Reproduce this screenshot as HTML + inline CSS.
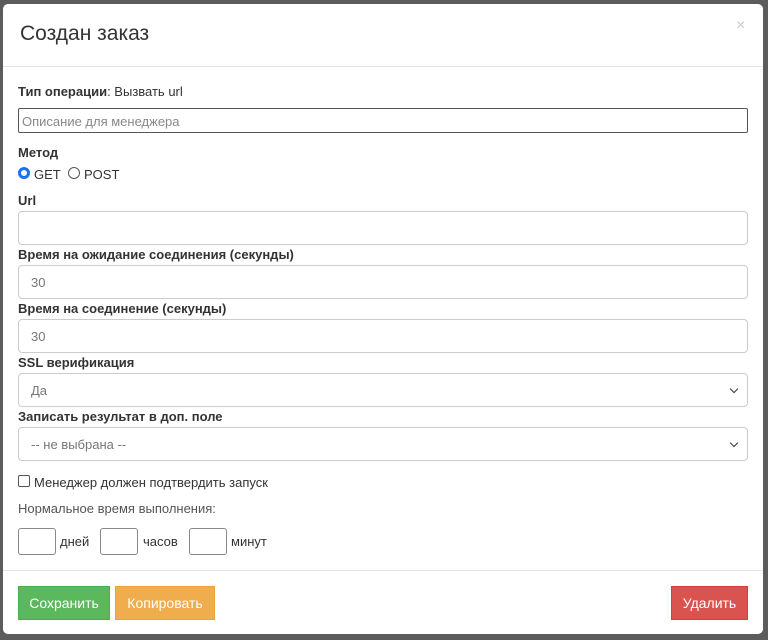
<!DOCTYPE html>
<html><head><meta charset="utf-8"><style>
*{box-sizing:border-box;margin:0;padding:0}
body{width:768px;height:640px;background:#5c5c5c;font-family:"Liberation Sans",sans-serif;font-size:13px;color:#333;position:relative;overflow:hidden}
.m{position:absolute;left:3px;top:4px;width:760px;height:630px;background:#fff;border-radius:5px}
.a{position:absolute}
.l{position:absolute;left:15px;font-weight:bold;font-size:13px;color:#333}
.i{position:absolute;left:15px;width:730px;height:34px;border:1px solid #ccc;border-radius:4px;font-size:13px;color:#777;padding:9px 12px}
.sel::after{content:"";position:absolute;right:10px;top:12px;width:5px;height:5px;border-right:1.5px solid #333;border-bottom:1.5px solid #333;transform:rotate(45deg)}
.b{position:absolute;top:582px;height:34px;color:#fff;font-size:14px;text-align:center;line-height:32px;border:1px solid}
.sm{position:absolute;top:524px;width:38px;height:27px;border:1px solid #888;border-radius:3px}
</style></head><body>
<div class="m">
<div class="a" style="left:17px;top:18px;font-size:21px;color:#333">Создан заказ</div>
<div class="a" style="left:733px;top:13px;font-size:16px;color:#ccc">×</div>
<div class="a" style="left:0;top:62px;width:760px;height:1px;background:#e5e5e5"></div>
<div class="l" style="top:80px">Тип операции<span style="font-weight:normal">: Вызвать url</span></div>
<div class="i" style="top:104px;height:25px;border-color:#555;border-radius:2px;padding:5px 3px;color:#888">Описание для менеджера</div>
<div class="l" style="top:141px">Метод</div>
<div class="a" style="left:15px;top:163px;width:12px;height:12px;border-radius:50%;border:3.5px solid #1a73e8;background:#fff"></div>
<div class="a" style="left:31px;top:163px;font-size:13px">GET</div>
<div class="a" style="left:65px;top:163px;width:12px;height:12px;border-radius:50%;border:1px solid #555"></div>
<div class="a" style="left:81px;top:163px;font-size:13px">POST</div>
<div class="l" style="top:189px">Url</div>
<div class="i" style="top:207px"></div>
<div class="l" style="top:243px">Время на ожидание соединения (секунды)</div>
<div class="i" style="top:261px">30</div>
<div class="l" style="top:297px">Время на соединение (секунды)</div>
<div class="i" style="top:315px">30</div>
<div class="l" style="top:351px">SSL верификация</div>
<div class="i sel" style="top:369px">Да</div>
<div class="l" style="top:405px">Записать результат в доп. поле</div>
<div class="i sel" style="top:423px">-- не выбрана --</div>
<div class="a" style="left:15px;top:471px;width:12px;height:12px;border:1px solid #555;border-radius:2px"></div>
<div class="a" style="left:31px;top:471px;font-size:13px">Менеджер должен подтвердить запуск</div>
<div class="a" style="left:15px;top:497px;font-size:13px;color:#555">Нормальное время выполнения:</div>
<div class="sm" style="left:15px"></div><div class="a" style="left:57px;top:530px">дней</div>
<div class="sm" style="left:97px"></div><div class="a" style="left:140px;top:530px">часов</div>
<div class="sm" style="left:186px"></div><div class="a" style="left:228px;top:530px">минут</div>
<div class="a" style="left:0;top:566px;width:760px;height:1px;background:#e5e5e5"></div>
<div class="b" style="left:15px;width:92px;background:#5cb85c;border-color:#4cae4c">Сохранить</div>
<div class="b" style="left:112px;width:100px;background:#f0ad4e;border-color:#eea236">Копировать</div>
<div class="b" style="left:668px;width:77px;background:#d9534f;border-color:#d43f3a">Удалить</div>
</div>
</body></html>
